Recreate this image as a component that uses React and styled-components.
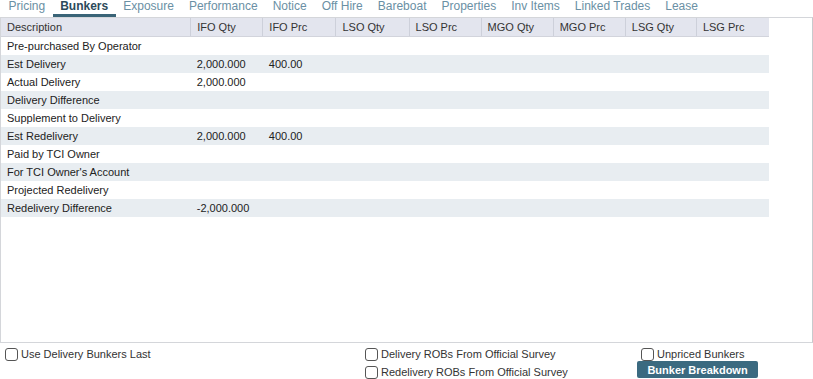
import React from "react";
import styled, { createGlobalStyle } from "styled-components";

const Global = createGlobalStyle`
  body { margin: 0; background: #fff; font-family: "Liberation Sans", Arial, sans-serif; }
`;

const Page = styled.div`
  width: 813px;
  height: 379px;
  display: flex;
  flex-direction: column;
  overflow: hidden;
`;

const Tabs = styled.div`
  display: flex;
  padding-left: 1px;
  height: 17px;
`;

const Tab = styled.div`
  padding: 0 7.5px;
  font-size: 12px;
  line-height: 13px;
  height: 14px;
  color: ${p => (p.active ? "#2c4a5a" : "#6a90a4")};
  font-weight: ${p => (p.active ? "bold" : "normal")};
  border-bottom: 3px solid ${p => (p.active ? "#3a6477" : "transparent")};
`;

const Panel = styled.div`
  height: 326px;
  border: 1px solid #d4d6da;
  border-right-color: #c8cacd;
  box-sizing: border-box;
`;

const Table = styled.table`
  border-collapse: collapse;
  table-layout: fixed;
  width: 768px;
  font-size: 11px;
  color: #222;
`;

const Th = styled.th`
  width: ${p => p.w - 7}px;
  height: 18px;
  padding: 0 0 0 6px;
  text-align: left;
  font-weight: normal;
  background: #e3e5ee;
  color: #333;
  border-right: 1px solid #cdd0da;
  border-bottom: 1px solid #d2d4dc;
  white-space: nowrap;
  overflow: hidden;
  &:last-child { border-right: none; }
`;

const Tr = styled.tr`
  height: 18px;
  background: ${p => (p.striped ? "#e8edf1" : "#fff")};
`;

const Td = styled.td`
  padding: 0 0 0 6px;
  white-space: nowrap;
  overflow: hidden;
`;

const Footer = styled.div`
  display: grid;
  grid-template-columns: 360px 272px 1fr;
  padding: 4px 0 0 5px;
  font-size: 11px;
  color: #333;
`;

const Col = styled.div`
  display: flex;
  flex-direction: column;
  gap: ${p => p.gap ?? 4}px;
  align-items: flex-start;
`;

const Check = styled.label`
  display: flex;
  align-items: center;
  gap: 3px;
  height: 14px;
  padding-left: ${p => p.indent || 0}px;
`;

const Box = styled.span`
  width: 11px;
  height: 11px;
  border: 1px solid #555;
  border-radius: 3px;
  background: #fff;
  display: inline-block;
`;

const Button = styled.button`
  width: 121px;
  height: 17px;
  border: none;
  border-radius: 2px;
  background: #3b6a80;
  color: #fff;
  font-family: "Liberation Sans", Arial, sans-serif;
  font-weight: bold;
  font-size: 11px;
  padding: 0;
`;

const tabs = ["Pricing", "Bunkers", "Exposure", "Performance", "Notice", "Off Hire", "Bareboat", "Properties", "Inv Items", "Linked Trades", "Lease"];

const cols = [
  ["Description", 190],
  ["IFO Qty", 72],
  ["IFO Prc", 73],
  ["LSO Qty", 73],
  ["LSO Prc", 72],
  ["MGO Qty", 72],
  ["MGO Prc", 72],
  ["LSG Qty", 71],
  ["LSG Prc", 73],
];

const rows = [
  ["Pre-purchased By Operator"],
  ["Est Delivery", "2,000.000", "400.00"],
  ["Actual Delivery", "2,000.000"],
  ["Delivery Difference"],
  ["Supplement to Delivery"],
  ["Est Redelivery", "2,000.000", "400.00"],
  ["Paid by TCI Owner"],
  ["For TCI Owner's Account"],
  ["Projected Redelivery"],
  ["Redelivery Difference", "-2,000.000"],
];

export default function App() {
  return (
    <Page>
      <Global />
      <Tabs>
        {tabs.map(t => (
          <Tab key={t} active={t === "Bunkers"}>{t}</Tab>
        ))}
      </Tabs>
      <Panel>
        <Table>
          <thead>
            <tr>
              {cols.map(([c, w]) => (
                <Th key={c} w={w}>{c}</Th>
              ))}
            </tr>
          </thead>
          <tbody>
            {rows.map((r, i) => (
              <Tr key={r[0]} striped={i % 2 === 1}>
                {cols.map((c, j) => (
                  <Td key={j}>{r[j] || ""}</Td>
                ))}
              </Tr>
            ))}
          </tbody>
        </Table>
      </Panel>
      <Footer>
        <Col>
          <Check><Box />Use Delivery Bunkers Last</Check>
        </Col>
        <Col>
          <Check><Box />Delivery ROBs From Official Survey</Check>
          <Check><Box />Redelivery ROBs From Official Survey</Check>
        </Col>
        <Col gap={0}>
          <Check indent={4}><Box />Unpriced Bunkers</Check>
          <Button>Bunker Breakdown</Button>
        </Col>
      </Footer>
    </Page>
  );
}
